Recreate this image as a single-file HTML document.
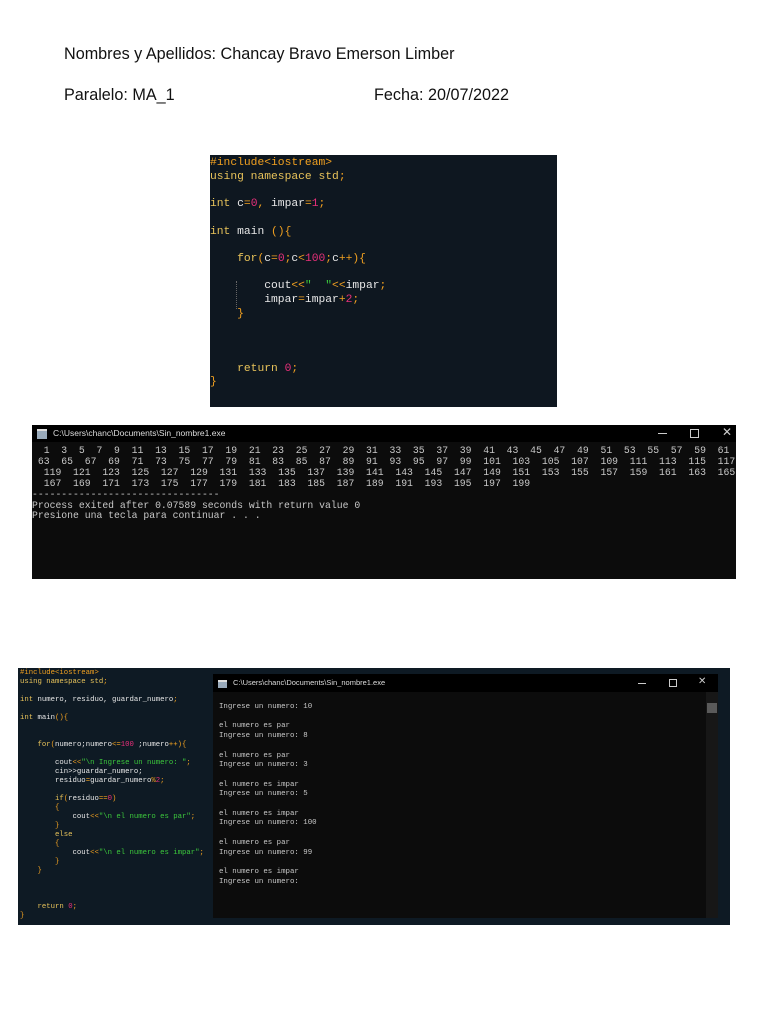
<!DOCTYPE html>
<html><head><meta charset="utf-8"><style>
body{margin:0;width:768px;height:1024px;background:#fff;position:relative;overflow:hidden;font-family:"Liberation Sans",sans-serif}
.t{position:absolute;font-size:16.2px;color:#111}
.box{position:absolute}
pre{margin:0;font-family:"Liberation Mono",monospace;position:absolute;white-space:pre}
.o{color:#f0a020}.y{color:#e8c35a}.w{color:#e8e8e8}.p{color:#e8307a}.g{color:#3cc83c}
</style></head><body>
<div class="t" style="left:64px;top:45px">Nombres y Apellidos: Chancay Bravo Emerson Limber</div>
<div class="t" style="left:64px;top:86px">Paralelo: MA_1</div>
<div class="t" style="left:374px;top:86px">Fecha: 20/07/2022</div>

<div class="box" style="left:210px;top:155px;width:347px;height:252px;background:#0e1720">
<pre style="left:0;top:2px;font-size:11.3px;line-height:13.7px"><span class="o">#include&lt;iostream&gt;</span>
<span class="y">using namespace std</span><span class="o">;</span>

<span class="y">int</span><span class="w"> c</span><span class="o">=</span><span class="p">0</span><span class="o">,</span><span class="w"> impar</span><span class="o">=</span><span class="p">1</span><span class="o">;</span>

<span class="y">int</span><span class="w"> main </span><span class="o">(){</span>

    <span class="y">for</span><span class="o">(</span><span class="w">c</span><span class="o">=</span><span class="p">0</span><span class="o">;</span><span class="w">c</span><span class="o">&lt;</span><span class="p">100</span><span class="o">;</span><span class="w">c</span><span class="o">++){</span>

        <span class="w">cout</span><span class="o">&lt;&lt;</span><span class="g">"  "</span><span class="o">&lt;&lt;</span><span class="w">impar</span><span class="o">;</span>
        <span class="w">impar</span><span class="o">=</span><span class="w">impar</span><span class="o">+</span><span class="p">2</span><span class="o">;</span>
    <span class="o">}</span>



    <span class="y">return</span> <span class="p">0</span><span class="o">;</span>
<span class="o">}</span></pre>
<div style="position:absolute;left:26px;top:126px;height:28px;border-left:1px dotted #666"></div>
</div>

<div class="box" style="left:32px;top:425px;width:704px;height:154px;background:#0c0c0c">
<div style="position:absolute;left:0;top:0;width:704px;height:17px;background:#000"></div>
<div style="position:absolute;left:5px;top:4px;width:10px;height:8px;background:#9ab;border-top:2px solid #ddd"></div>
<div style="position:absolute;left:21px;top:3px;font-size:8.5px;color:#ddd">C:\Users\chanc\Documents\Sin_nombre1.exe</div>
<div style="position:absolute;left:626px;top:8px;width:9px;height:1px;background:#ccc"></div>
<div style="position:absolute;left:658px;top:4px;width:7px;height:7px;border:1px solid #ccc"></div>
<div style="position:absolute;left:690px;top:0px;font-size:12px;color:#ccc">✕</div>
<pre style="left:0;top:21px;font-size:9.78px;line-height:10.9px;color:#c8c8c8">  1  3  5  7  9  11  13  15  17  19  21  23  25  27  29  31  33  35  37  39  41  43  45  47  49  51  53  55  57  59  61 
 63  65  67  69  71  73  75  77  79  81  83  85  87  89  91  93  95  97  99  101  103  105  107  109  111  113  115  117
  119  121  123  125  127  129  131  133  135  137  139  141  143  145  147  149  151  153  155  157  159  161  163  165
  167  169  171  173  175  177  179  181  183  185  187  189  191  193  195  197  199
--------------------------------
Process exited after 0.07589 seconds with return value 0
Presione una tecla para continuar . . .</pre>
</div>

<div class="box" style="left:18px;top:668px;width:712px;height:257px;background:#0e1a24">
<pre style="left:2px;top:1px;font-size:7.3px;line-height:9px"><span class="o">#include&lt;iostream&gt;</span>
<span class="y">using namespace std</span><span class="o">;</span>

<span class="y">int</span><span class="w"> numero, residuo, guardar_numero</span><span class="o">;</span>

<span class="y">int</span><span class="w"> main</span><span class="o">(){</span>


    <span class="y">for</span><span class="o">(</span><span class="w">numero;numero</span><span class="o">&lt;=</span><span class="p">100</span><span class="w"> ;numero</span><span class="o">++){</span>

        <span class="w">cout</span><span class="o">&lt;&lt;</span><span class="g">"\n Ingrese un numero: "</span><span class="o">;</span>
        <span class="w">cin&gt;&gt;guardar_numero;</span>
        <span class="w">residuo</span><span class="o">=</span><span class="w">guardar_numero</span><span class="o">%</span><span class="p">2</span><span class="o">;</span>

        <span class="y">if</span><span class="o">(</span><span class="w">residuo</span><span class="o">==</span><span class="p">0</span><span class="o">)</span>
        <span class="o">{</span>
            <span class="w">cout</span><span class="o">&lt;&lt;</span><span class="g">"\n el numero es par"</span><span class="o">;</span>
        <span class="o">}</span>
        <span class="y">else</span>
        <span class="o">{</span>
            <span class="w">cout</span><span class="o">&lt;&lt;</span><span class="g">"\n el numero es impar"</span><span class="o">;</span>
        <span class="o">}</span>
    <span class="o">}</span>



    <span class="y">return</span> <span class="p">0</span><span class="o">;</span>
<span class="o">}</span></pre>
<div class="box" style="left:195px;top:6px;width:505px;height:244px;background:#0c0c0c">
<div style="position:absolute;left:0;top:0;width:505px;height:18px;background:#000"></div>
<div style="position:absolute;left:5px;top:6px;width:9px;height:6px;background:#9ab;border-top:2px solid #ddd"></div>
<div style="position:absolute;left:20px;top:4px;font-size:7.5px;color:#ddd">C:\Users\chanc\Documents\Sin_nombre1.exe</div>
<div style="position:absolute;left:425px;top:9px;width:8px;height:1px;background:#ccc"></div>
<div style="position:absolute;left:456px;top:5px;width:6px;height:6px;border:1px solid #ccc"></div>
<div style="position:absolute;left:485px;top:2px;font-size:10px;color:#ccc">✕</div>
<div style="position:absolute;left:493px;top:18px;width:12px;height:226px;background:#171717"></div>
<div style="position:absolute;left:494px;top:29px;width:10px;height:10px;background:#5a5a5a"></div>
<pre style="left:6px;top:29px;font-size:7.4px;line-height:9.7px;color:#c8c8c8">Ingrese un numero: 10

el numero es par
Ingrese un numero: 8

el numero es par
Ingrese un numero: 3

el numero es impar
Ingrese un numero: 5

el numero es impar
Ingrese un numero: 100

el numero es par
Ingrese un numero: 99

el numero es impar
Ingrese un numero:</pre>
</div>
</div>
</body></html>
